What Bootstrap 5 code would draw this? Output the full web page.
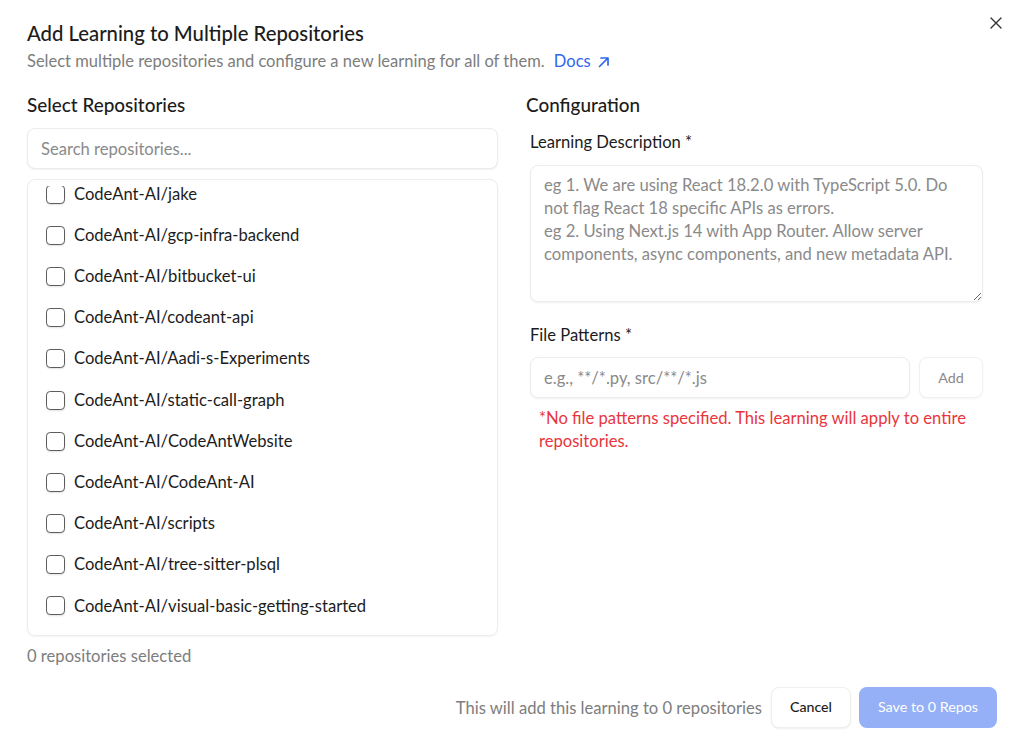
<!DOCTYPE html>
<html lang="en">
<head>
  <meta charset="UTF-8" />
  <title>Add Learning to Multiple Repositories</title>
  <link href="https://cdn.jsdelivr.net/npm/bootstrap@5.3.2/dist/css/bootstrap.min.css" rel="stylesheet"/>
  <style>
    html, body { height: 100%; }
    body {
      background: #fff;
      font-family: Lato, "Noto Sans", sans-serif;
      font-size: 16.6px;
      color: #1c1c1c;
      overflow: hidden;
    }
    .dialog-wrap { height: 751px; padding: 21px 27px 23px; }
    .dialog-title { font-size: 20.3px; font-weight: 500; line-height: 24px; margin: 0; }
    .dialog-sub { font-size: 16.5px; line-height: 24px; color: #7d7d7d; margin-top: 4px; }
    .docs-link { color: #2f66ec; text-decoration: none; margin-left: 5px; }
    .docs-arrow { margin-left: 3px; vertical-align: -1px; }
    .close-x { top: 15px; right: 20px; width: 16px; height: 16px; padding: 0; border: 0; background: none; line-height: 0; }
    .left-col { width: 471px; }
    .right-col { width: 457px; margin-left: 28px; }
    .section-head { font-size: 18.9px; font-weight: 500; line-height: 24px; margin: 0; }
    .field {
      border: 1px solid #ececec;
      border-radius: 8px;
      box-shadow: 0 1px 2px rgba(0,0,0,.06);
      font-size: 16.6px;
      color: #1c1c1c;
      padding: 7px 13px;
    }
    .field::placeholder { color: #8a8a8a; opacity: 1; }
    .field:focus { border-color: #ececec; box-shadow: 0 1px 2px rgba(0,0,0,.06); }
    .search-box { height: 41px; margin-top: 11px; }
    .repo-box {
      height: 457px;
      margin-top: 10px;
      border: 1px solid #ececec;
      border-radius: 8px;
      box-shadow: 0 1px 2px rgba(0,0,0,.05);
      padding: 6px 0 0 18px;
    }
    .repo-scroll { height: 449px; overflow: hidden; }
    .repo-list { margin-top: -12.5px; }
    .repo-row { height: 41.2px; gap: 9px; }
    .repo-check {
      width: 19px;
      height: 19px;
      margin: 0;
      border: 1px solid #5c5c5c;
      border-radius: 5px;
      box-shadow: 0 1px 2px rgba(0,0,0,.12);
      flex: none;
    }
    .repo-name { font-size: 16.6px; color: #1c1c1c; }
    .muted-count { color: #7d7d7d; line-height: 24px; margin-top: 8px; }
    .config-body { padding-left: 4px; }
    .field-label { font-size: 16.6px; line-height: 24px; display: block; margin: 0; }
    .label-desc { padding-top: 13px; }
    .label-patterns { padding-top: 21px; }
    .desc-area { height: 137px; margin-top: 11px; line-height: 23px; padding: 8px 13px; }
    .pattern-input { height: 41px; }
    .add-btn {
      width: 64px;
      height: 41px;
      border: 1px solid #f0f0f0;
      border-radius: 8px;
      background: #fff;
      color: #8a8a8a;
      font-size: 14.3px;
      padding: 0;
      box-shadow: 0 1px 2px rgba(0,0,0,.04);
    }
    .pattern-row { margin-top: 10px; gap: 9px; }
    .pattern-note { color: #e8363c; line-height: 23px; padding-left: 9px; margin-top: 9px; }
    .foot-note { color: #7d7d7d; margin-right: 1px; padding-top: 2px; }
    .cancel-btn {
      width: 80px;
      height: 41px;
      border: 1px solid #efefef;
      border-radius: 8px;
      background: #fff;
      color: #1c1c1c;
      font-size: 14.2px;
      font-weight: 500;
      padding: 0 0 2px;
      box-shadow: 0 1px 2px rgba(0,0,0,.07);
    }
    .save-btn {
      width: 138px;
      height: 41px;
      border: 0;
      border-radius: 8px;
      background: #95b0f6;
      color: #fff;
      font-size: 14.3px;
      font-weight: 400;
      padding: 0 0 2px;
    }
  </style>
</head>
<body>
  <div class="dialog-wrap position-relative d-flex flex-column">
    <button type="button" class="close-x position-absolute" aria-label="Close">
      <svg width="16" height="16" viewBox="0 0 16 16" fill="none" stroke="#333" stroke-width="1.4" stroke-linecap="round"><path d="M3 3l10 10M13 3L3 13"/></svg>
    </button>

    <h1 class="dialog-title">Add Learning to Multiple Repositories</h1>
    <div class="dialog-sub">Select multiple repositories and configure a new learning for all of them.
      <a href="#" class="docs-link">Docs
        <svg class="docs-arrow" width="12" height="12" viewBox="0 0 12 12" fill="none" stroke="#2f66ec" stroke-width="1.7" stroke-linecap="round" stroke-linejoin="round"><path d="M1.5 10.5L10 2M3 2H10V9"/></svg>
      </a>
    </div>

    <div class="d-flex mt-3">
      <div class="left-col">
        <h2 class="section-head mt-1">Select Repositories</h2>
        <input type="text" class="form-control field search-box" placeholder="Search repositories..." />
        <div class="repo-box">
          <div class="repo-scroll">
            <div class="repo-list" id="repoList"></div>
          </div>
        </div>
        <div class="muted-count">0 repositories selected</div>
      </div>

      <div class="right-col">
        <h2 class="section-head mt-1">Configuration</h2>
        <div class="config-body">
          <label class="field-label label-desc">Learning Description *</label>
          <textarea class="form-control field desc-area" placeholder="eg 1. We are using React 18.2.0 with TypeScript 5.0. Do not flag React 18 specific APIs as errors.&#10;eg 2. Using Next.js 14 with App Router. Allow server components, async components, and new metadata API."></textarea>
          <label class="field-label label-patterns">File Patterns *</label>
          <div class="d-flex pattern-row">
            <input type="text" class="form-control field pattern-input" placeholder="e.g., **/*.py, src/**/*.js" />
            <button type="button" class="add-btn flex-shrink-0">Add</button>
          </div>
          <div class="pattern-note">*No file patterns specified. This learning will apply to entire repositories.</div>
        </div>
      </div>
    </div>

    <div class="d-flex justify-content-end align-items-center gap-2 mt-auto">
      <span class="foot-note">This will add this learning to 0 repositories</span>
      <button type="button" class="cancel-btn">Cancel</button>
      <button type="button" class="save-btn">Save to 0 Repos</button>
    </div>
  </div>

  <script>
    const repos = ["jake", "gcp-infra-backend", "bitbucket-ui", "codeant-api", "Aadi-s-Experiments", "static-call-graph", "CodeAntWebsite", "CodeAnt-AI", "scripts", "tree-sitter-plsql", "visual-basic-getting-started"];
    document.getElementById("repoList").innerHTML = repos.map(r =>
      '<label class="repo-row d-flex align-items-center"><input type="checkbox" class="form-check-input repo-check"/><span class="repo-name">CodeAnt-AI/' + r + '</span></label>'
    ).join("");
  </script>
</body>
</html>
